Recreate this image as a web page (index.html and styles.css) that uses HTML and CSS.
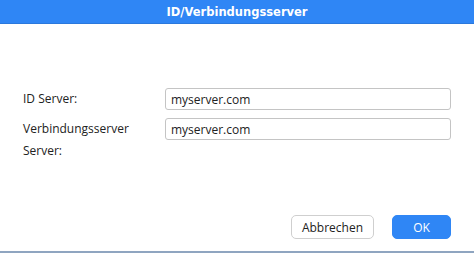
FILE: index.html
```html
<!DOCTYPE html>
<html lang="de">
<head>
    <meta charset="UTF-8">
    <meta name="viewport" content="width=device-width, initial-scale=1.0">
    <title>ID/Verbindungsserver</title>
    <link rel="stylesheet" href="styles.css">
</head>
<body>
    <div class="dialog">
        <div class="titlebar">ID/Verbindungsserver</div>

        <div class="form">
            <div class="row">
                <label class="label" for="idServer">ID Server:</label>
                <input class="field" id="idServer" type="text" value="myserver.com">
            </div>
            <div class="row">
                <label class="label" for="relayServer">Verbindungsserver<br>Server:</label>
                <input class="field" id="relayServer" type="text" value="myserver.com">
            </div>
        </div>

        <div class="buttons">
            <button class="btn btn-cancel">Abbrechen</button>
            <button class="btn btn-ok">OK</button>
        </div>

        <div class="bottom-strip"></div>
    </div>
</body>
</html>
```

FILE: styles.css
```css
body {
    margin: 0;
    font-family: 'Open Sans', 'Noto Sans', sans-serif;
    font-size: 12px;
    color: #222;
    background: #fff;
}

.dialog {
    height: 253px;
    display: flex;
    flex-direction: column;
}

.titlebar {
    height: 24px;
    line-height: 24px;
    background: #2f86f5;
    border-bottom: 1px solid #2a78dc;
    box-sizing: border-box;
    color: #fff;
    text-align: center;
    font-family: 'DejaVu Sans', sans-serif;
    font-weight: bold;
    font-size: 11.5px;
}

.form {
    padding: 64px 23px 0 23px;
    display: flex;
    flex-direction: column;
    gap: 8px;
}

.row {
    display: flex;
    align-items: flex-start;
}

.label {
    width: 142px;
    line-height: 22px;
}

.field {
    width: 286px;
    height: 22px;
    box-sizing: border-box;
    border: 1px solid #c4c4c4;
    border-radius: 3px;
    padding: 0 5px;
    font-family: inherit;
    font-size: 12px;
    color: #222;
    background: #fff;
}

.buttons {
    margin-top: auto;
    display: flex;
    justify-content: flex-end;
    gap: 18px;
    padding: 0 23px 12px 0;
}

.btn {
    height: 24px;
    border-radius: 5px;
    font-family: inherit;
    font-size: 12px;
    padding: 0;
}

.btn-cancel {
    width: 83px;
    background: #fff;
    border: 1px solid #cfcfcf;
    color: #222;
}

.btn-ok {
    width: 59px;
    background: #2f86f5;
    border: 1px solid #2f86f5;
    color: #fff;
}

.bottom-strip {
    height: 2px;
    background: #8fa5c0;
}
```
